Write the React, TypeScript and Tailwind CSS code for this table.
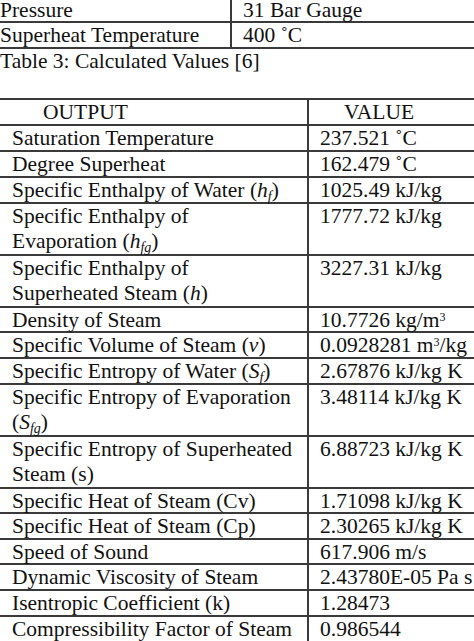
import React from "react";

type Row = { h: number; label: React.ReactNode; value: React.ReactNode };

const I = ({ children }: { children: React.ReactNode }) => <i>{children}</i>;
const Sub = ({ children }: { children: React.ReactNode }) => (
  <sub className="italic text-[14px]">{children}</sub>
);
const Sup = ({ children }: { children: React.ReactNode }) => (
  <sup className="text-[12px]">{children}</sup>
);

const rows: Row[] = [
  { h: 26, label: "Saturation Temperature", value: "237.521 ˚C" },
  { h: 26, label: "Degree Superheat", value: "162.479 ˚C" },
  {
    h: 26,
    label: (
      <>
        Specific Enthalpy of Water (<I>h</I>
        <Sub>f</Sub>)
      </>
    ),
    value: "1025.49 kJ/kg",
  },
  {
    h: 52,
    label: (
      <>
        Specific Enthalpy of
        <br />
        Evaporation (<I>h</I>
        <Sub>fg</Sub>)
      </>
    ),
    value: "1777.72 kJ/kg",
  },
  {
    h: 52,
    label: (
      <>
        Specific Enthalpy of
        <br />
        Superheated Steam (<I>h</I>)
      </>
    ),
    value: "3227.31 kJ/kg",
  },
  {
    h: 25,
    label: "Density of Steam",
    value: (
      <>
        10.7726 kg/m<Sup>3</Sup>
      </>
    ),
  },
  {
    h: 26,
    label: (
      <>
        Specific Volume of Steam (<I>v</I>)
      </>
    ),
    value: (
      <>
        0.0928281 m<Sup>3</Sup>/kg
      </>
    ),
  },
  {
    h: 26,
    label: (
      <>
        Specific Entropy of Water (<I>S</I>
        <Sub>f</Sub>)
      </>
    ),
    value: "2.67876 kJ/kg K",
  },
  {
    h: 52,
    label: (
      <>
        Specific Entropy of Evaporation
        <br />(<I>S</I>
        <Sub>fg</Sub>)
      </>
    ),
    value: "3.48114 kJ/kg K",
  },
  {
    h: 52,
    label: (
      <>
        Specific Entropy of Superheated
        <br />
        Steam (s)
      </>
    ),
    value: "6.88723 kJ/kg K",
  },
  { h: 25, label: "Specific Heat of Steam (Cv)", value: "1.71098 kJ/kg K" },
  { h: 26, label: "Specific Heat of Steam (Cp)", value: "2.30265 kJ/kg K" },
  { h: 25, label: "Speed of Sound", value: "617.906 m/s" },
  { h: 26, label: "Dynamic Viscosity of Steam", value: "2.43780E-05 Pa s" },
  { h: 26, label: "Isentropic Coefficient (k)", value: "1.28473" },
  { h: 26, label: "Compressibility Factor of Steam", value: "0.986544" },
];

export default function App() {
  return (
    <div
      className="w-[474px] h-[641px] overflow-hidden bg-white text-[#111] text-[21.5px] leading-[25px] whitespace-nowrap"
      style={{ fontFamily: '"Liberation Serif", "Times New Roman", serif' }}
    >
      {/* Top table (continuation) */}
      <div className="flex h-[23px] border-b-2 border-[#3a3a3a] leading-[21px]">
        <div className="w-[232px] border-r-2 border-[#3a3a3a]">Pressure</div>
        <div className="flex-1 pl-[11px]">31 Bar Gauge</div>
      </div>
      <div className="flex h-[26px] border-b-2 border-[#3a3a3a]">
        <div className="w-[232px] border-r-2 border-[#3a3a3a]">Superheat Temperature</div>
        <div className="flex-1 pl-[11px]">400 ˚C</div>
      </div>

      {/* Caption */}
      <div className="h-[49px]">Table 3: Calculated Values [6]</div>

      {/* Calculated values table */}
      <div className="border-t-2 border-[#3a3a3a]">
        <div className="flex h-[26px] border-b-2 border-[#3a3a3a]">
          <div className="w-[309px] border-r-2 border-[#3a3a3a] pl-[43px]">OUTPUT</div>
          <div className="flex-1 pl-[35px]">VALUE</div>
        </div>
        {rows.map((r, i) => (
          <div
            key={i}
            className="flex border-b-2 border-[#3a3a3a]"
            style={{ height: r.h }}
          >
            <div className="w-[309px] border-r-2 border-[#3a3a3a] pl-[12px]">{r.label}</div>
            <div className="flex-1 pl-[11px]">{r.value}</div>
          </div>
        ))}
      </div>
    </div>
  );
}
